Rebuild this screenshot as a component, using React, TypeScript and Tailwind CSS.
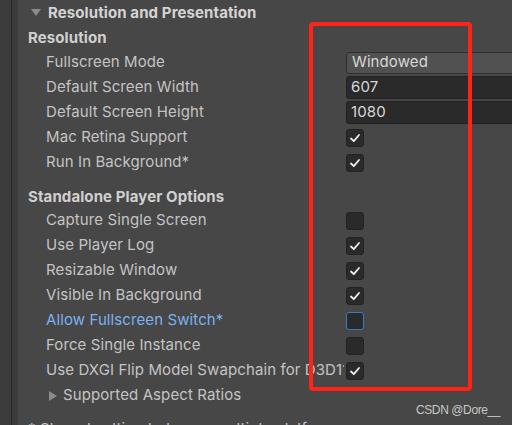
import React from 'react';

const Check = ({ checked, focused }: { checked?: boolean; focused?: boolean }) => (
    <div
        className={`w-[18px] h-[18px] rounded-[3px] bg-[#2a2a2a] border flex items-center justify-center ${
            focused ? 'border-[#3a7ac4]' : 'border-[#232323]'
        }`}
    >
        {checked && (
            <svg width="12" height="12" viewBox="0 0 12 12">
                <path d="M2 6.5 L4.8 9.2 L10 3" stroke="#eeeeee" strokeWidth="1.8" fill="none" strokeLinecap="round" strokeLinejoin="round" />
            </svg>
        )}
    </div>
);

const Row = ({ label, children, blue }: { label: string; children?: React.ReactNode; blue?: boolean }) => (
    <div className="flex items-center h-[25px] shrink-0">
        <div className={`w-[326px] mr-[2px] shrink-0 pl-[28px] whitespace-nowrap overflow-hidden ${blue ? 'text-[#7cb1f0]' : 'text-[#c4c4c4]'}`}>
            {label}
        </div>
        <div className="flex-1 flex items-center">{children}</div>
    </div>
);

export default function App() {
    const standalone: [string, boolean, boolean?][] = [
        ['Capture Single Screen', false],
        ['Use Player Log', true],
        ['Resizable Window', true],
        ['Visible In Background', true],
        ['Allow Fullscreen Switch*', false, true],
        ['Force Single Instance', false],
        ['Use DXGI Flip Model Swapchain for D3D11', true],
    ];

    return (
        <div
            className="relative w-[512px] h-[425px] overflow-hidden flex bg-[#474747] text-[15px] tracking-[0.1px]"
            style={{ fontFamily: 'Inter, "Noto Sans", sans-serif' }}
        >
            {/* left gutter */}
            <div className="w-[18px] shrink-0 bg-[#3c3c3c] flex">
                <div className="w-[11px]" />
                <div className="w-px bg-[#262626]" />
            </div>

            <div className="flex-1 flex flex-col">
                {/* foldout header */}
                <div className="h-[26px] shrink-0 flex items-center pl-[13px] font-bold text-[#d4d4d4]">
                    <svg width="10" height="8" viewBox="0 0 10 8" className="mr-[7px]">
                        <path d="M0 0 H10 L5 7 Z" fill="#8c8c8c" />
                    </svg>
                    Resolution and Presentation
                </div>

                <div className="h-[24px] shrink-0 flex items-center pl-[10px] font-bold text-[#d0d0d0]">Resolution</div>

                <Row label="Fullscreen Mode">
                    <div className="w-[200px] h-[22px] rounded-[3px] bg-[#515151] border border-[#2f2f2f] flex items-center pl-[5px] text-[#d8d8d8]">
                        Windowed
                    </div>
                </Row>
                <Row label="Default Screen Width">
                    <div className="w-[200px] h-[23px] rounded-[3px] bg-[#2a2a2a] border border-[#212121] flex items-center pl-[4px] text-[#d8d8d8]">
                        607
                    </div>
                </Row>
                <Row label="Default Screen Height">
                    <div className="w-[200px] h-[23px] rounded-[3px] bg-[#2a2a2a] border border-[#212121] flex items-center pl-[4px] text-[#d8d8d8]">
                        1080
                    </div>
                </Row>
                <Row label="Mac Retina Support">
                    <Check checked />
                </Row>
                <Row label="Run In Background*">
                    <Check checked />
                </Row>

                <div className="h-[11px] shrink-0" />
                <div className="h-[22px] shrink-0 flex items-center pl-[10px] font-bold text-[#d0d0d0]">Standalone Player Options</div>

                {standalone.map(([label, checked, focused]) => (
                    <Row key={label} label={label} blue={focused}>
                        <Check checked={checked} focused={focused} />
                    </Row>
                ))}

                <div className="h-[25px] shrink-0 flex items-center pl-[31px] text-[#c4c4c4]">
                    <svg width="8" height="10" viewBox="0 0 8 10" className="mr-[6px]">
                        <path d="M0 0 L8 5 L0 10 Z" fill="#8c8c8c" />
                    </svg>
                    Supported Aspect Ratios
                </div>

                <div className="shrink-0 pt-[10px] pl-[10px] text-[#c4c4c4] whitespace-nowrap">
                    * Shared setting between multiple platforms.
                </div>
            </div>

            {/* annotation box */}
            <div className="absolute left-[309px] top-[22px] w-[163px] h-[369px] border-4 border-[#ff2318] rounded-[4px]" />

            {/* watermark */}
            <div
                className="absolute left-[416px] top-[401px] text-[12px] tracking-[-0.4px] text-[#c8c8c8] whitespace-nowrap"
                style={{ fontFamily: '"Liberation Sans", Arial, sans-serif' }}
            >
                CSDN @Dore__
            </div>
        </div>
    );
}
